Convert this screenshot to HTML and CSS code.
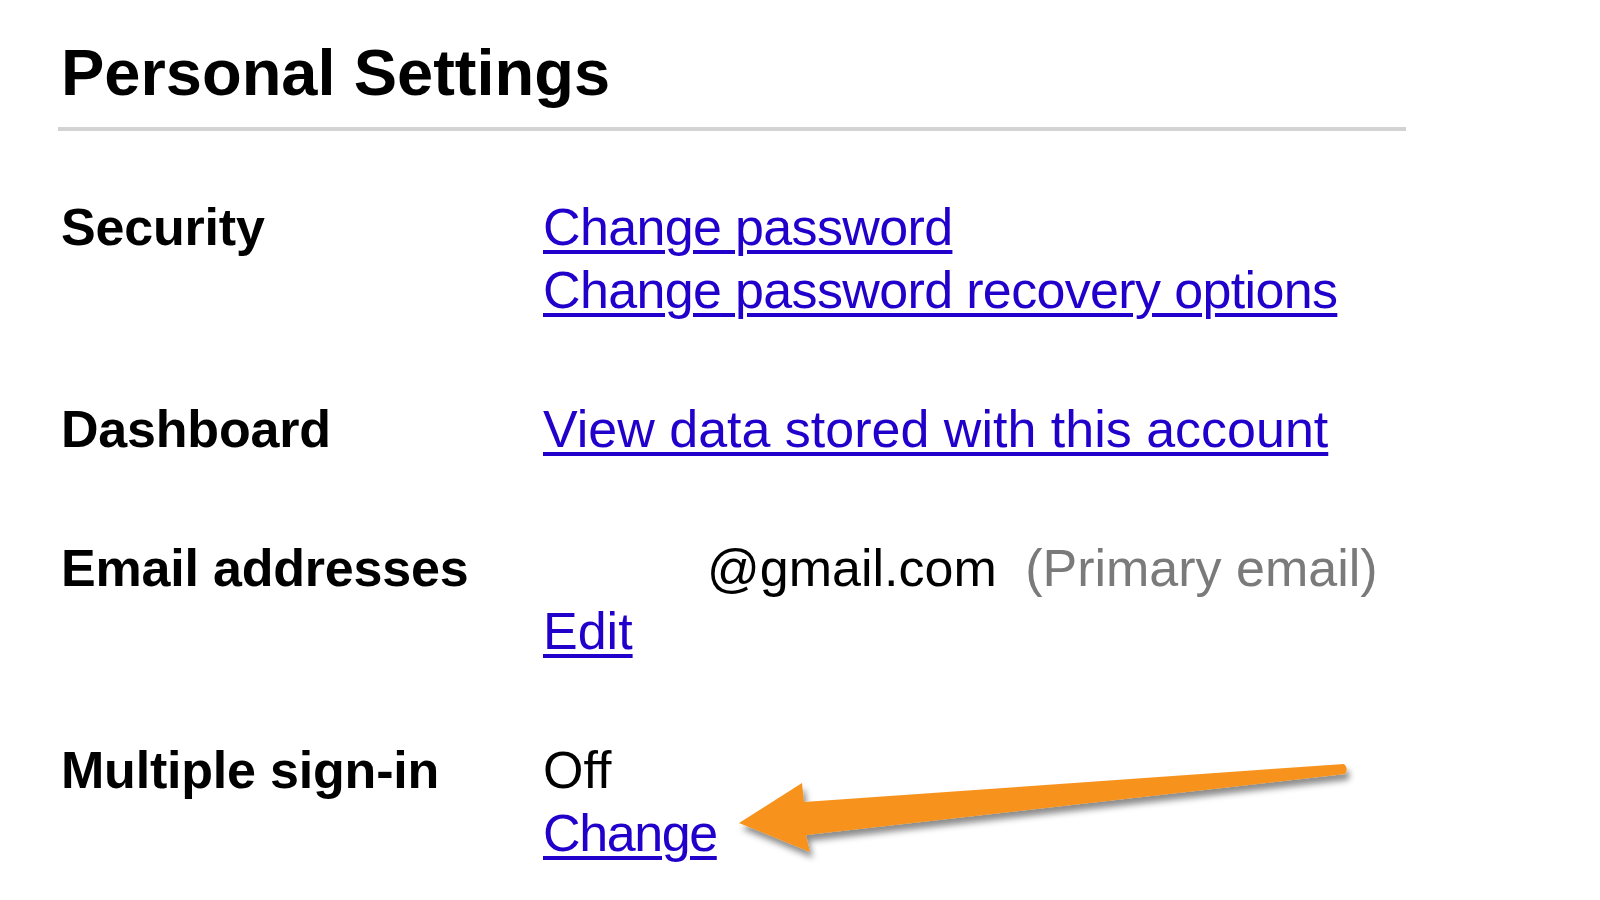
FILE: index.html
```html
<!DOCTYPE html>
<html lang="en">
<head>
<meta charset="utf-8">
<title>Personal Settings</title>
<link rel="stylesheet" href="styles.css">
</head>
<body>
<main class="page">
  <h1 class="title">Personal Settings</h1>
  <hr class="rule">
  <div class="settings">
    <div class="row">
      <div class="label">Security</div>
      <div class="value">
        <a href="#" class="link tight">Change password</a>
        <a href="#" class="link tight">Change password recovery options</a>
      </div>
    </div>
    <div class="row">
      <div class="label">Dashboard</div>
      <div class="value">
        <a href="#" class="link">View data stored with this account</a>
      </div>
    </div>
    <div class="row">
      <div class="label">Email addresses</div>
      <div class="value">
        <div class="line"><span class="redacted"></span>@gmail.com <span class="note">(Primary email)</span></div>
        <a href="#" class="link">Edit</a>
      </div>
    </div>
    <div class="row">
      <div class="label">Multiple sign-in</div>
      <div class="value">
        <div class="line">Off</div>
        <a href="#" class="link tighter">Change</a>
      </div>
    </div>
  </div>
  <svg class="arrow" viewBox="0 0 1600 900" width="1600" height="900" aria-hidden="true">
    <defs>
      <filter id="shadow" x="-10%" y="-50%" width="120%" height="200%">
        <feDropShadow dx="3" dy="6" stdDeviation="3" flood-color="#000" flood-opacity="0.45"/>
      </filter>
    </defs>
    <path d="M1344,764 Q1349,768 1345,774 L806,835 L810,852 L739,823 L802,783 L804,802 Z" fill="#f7931e" filter="url(#shadow)"/>
  </svg>
</main>
</body>
</html>
```
FILE: styles.css
```css
html, body {
  margin: 0;
  padding: 0;
  background: #ffffff;
}

body {
  font-family: "Liberation Sans", Arial, sans-serif;
  color: #000;
  width: 1600px;
  height: 900px;
  overflow: hidden;
}

.page {
  position: relative;
  width: 1600px;
  height: 900px;
  padding: 35px 0 0 61px;
  box-sizing: border-box;
}

.title {
  margin: 0;
  font-size: 65px;
  line-height: 75px;
  font-weight: bold;
  height: 75px;
}

.rule {
  margin: 17px 0 0 -3px;
  width: 1348px;
  height: 4px;
  border: 0;
  background: #d3d3d3;
}

.settings {
  margin-top: 65px;
  display: flex;
  flex-direction: column;
  gap: 76px;
}

.row {
  display: grid;
  grid-template-columns: 482px 1fr;
  font-size: 52px;
  line-height: 63px;
}

.label {
  font-weight: bold;
  letter-spacing: -0.2px;
}

.value {
  display: flex;
  flex-direction: column;
  align-items: flex-start;
}

.link {
  color: #2200cc;
  text-decoration: underline;
  text-decoration-thickness: 4px;
  text-underline-offset: 5px;
}

.tight {
  letter-spacing: -0.65px;
}

.tighter {
  letter-spacing: -1.4px;
}

.redacted {
  display: inline-block;
  width: 164px;
}

.note {
  color: #7a7a7a;
  margin-left: 14px;
}

.arrow {
  position: absolute;
  top: 0;
  left: 0;
  pointer-events: none;
}
```
